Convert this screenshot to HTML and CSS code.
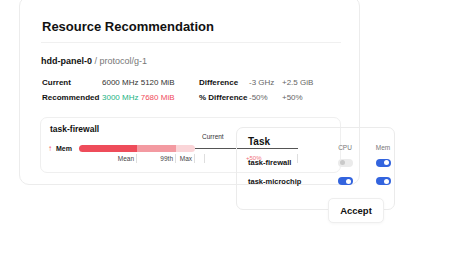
FILE: index.html
```html
<html>
    <head>
        <link rel="stylesheet" href="styles.css">
        <title>Resource Recommendation</title>
    </head>
    <body>
        <div class="card">
            <h1 class="title">Resource Recommendation</h1>
            <div class="divider"></div>
            <p class="path"><b>hdd-panel-0</b> <span class="muted">/ protocol/g-1</span></p>
            <div class="stats">
                <span class="label">Current</span>
                <span class="value">6000 MHz 5120 MiB</span>
                <span class="label">Difference</span>
                <span class="value soft">-3 GHz</span>
                <span class="value soft">+2.5 GiB</span>

                <span class="label">Recommended</span>
                <span class="value"><span class="good">3000 MHz</span> <span class="bad">7680 MiB</span></span>
                <span class="label">% Difference</span>
                <span class="value soft">-50%</span>
                <span class="value soft">+50%</span>
            </div>
            <div class="task-card">
                <div class="task-name">task-firewall</div>
                <div class="mem-row">
                    <span class="mem-label"><span class="arrow">&uarr;</span> Mem</span>
                    <div class="track">
                        <span class="seg seg-mean"></span>
                        <span class="seg seg-p99"></span>
                        <span class="seg seg-max"></span>
                        <span class="current-line"></span>
                        <span class="current-label">Current</span>
                    </div>
                </div>
                <div class="ticks">
                    <span class="tick w-mean">Mean</span>
                    <span class="tick w-p99">99th</span>
                    <span class="tick w-max">Max</span>
                    <span class="tick w-cur"></span>
                    <span class="tick w-rec"><span class="rec">+50%</span></span>
                </div>
            </div>
        </div>

        <!-- floating panel over the card -->
        <div class="panel">
            <div class="panel-grid">
                <span class="panel-head">Task</span>
                <span class="col-head">CPU</span>
                <span class="col-head">Mem</span>

                <span class="row-name">task-firewall</span>
                <span class="toggle off"></span>
                <span class="toggle"></span>

                <span class="row-name">task-microchip</span>
                <span class="toggle"></span>
                <span class="toggle"></span>
            </div>
        </div>
        <div class="accept">Accept</div>
    </body>
</html>
```

FILE: styles.css
```css
html {padding: 0;}
body {font-family: "Liberation Sans", Arial, sans-serif; color: #111; margin: 0; padding: 0; background: #fff; position: relative; width: 474px; height: 274px; overflow: hidden;}

.card {
    box-sizing: border-box;
    width: 341px;
    height: 189px;
    margin: -4px 0 0 19px;
    padding: 22px 18px 0 21px;
    border: 1px solid #ececec;
    border-radius: 10px;
    background: #fff;
}

.title {font-size: 13px; line-height: 16px; font-weight: bold; margin: 0; padding-left: 1px;}
.divider {height: 1px; background: #f0f0f0; margin-top: 7px;}

.path {font-size: 9px; line-height: 12px; margin: 12px 0 0 0;}
.muted {color: #777;}

.stats {
    display: grid;
    grid-template-columns: 60px 97px 50px 33px auto;
    grid-auto-rows: 15px;
    align-items: center;
    font-size: 8px;
    margin-top: 8px;
    padding-left: 1px;
}
.label {font-weight: bold; color: #111; white-space: nowrap;}
.value {color: #333; white-space: nowrap;}
.soft {color: #666;}
.good {color: #1db384;}
.bad {color: #f04b5b;}

.task-card {
    box-sizing: border-box;
    height: 56px;
    margin-top: 12px;
    margin-left: -1px;
    padding: 6px 0 0 9px;
    border: 1px solid #efefef;
    border-radius: 7px;
}
.task-name {font-size: 8.5px; line-height: 11px; font-weight: bold;}

.mem-row {display: flex; align-items: center; height: 8px; margin: 9px 0 0 -2px;}
.mem-label {width: 31px; font-size: 7px; font-weight: bold; white-space: nowrap;}
.arrow {color: #f04b5b; font-size: 8px; font-weight: normal; margin-right: 2px;}

.track {position: relative; width: 219px; height: 8px; display: flex; align-items: center;}
.seg {height: 7px; display: block;}
.seg-mean {width: 58px; background: #ee4c5a; border-radius: 4px 0 0 4px;}
.seg-p99 {width: 39px; background: #f39aa1;}
.seg-max {width: 19px; background: #fad5d8; border-radius: 0 4px 4px 0;}
.current-line {flex: 1; height: 1px; background: #555;}
.current-label {position: absolute; left: 123px; top: -11px; font-size: 6.5px; line-height: 8px; color: #333;}

.ticks {display: flex; margin: 1.5px 0 0 29px; font-size: 6.5px; line-height: 9px; color: #444;}
.tick {box-sizing: border-box; height: 9px; border-right: 1px solid #dedede; text-align: right; padding-right: 2px;}
.w-mean {width: 58px;}
.w-p99 {width: 39px;}
.w-max {width: 19px;}
.w-cur {width: 10px;}
.w-rec {width: 93px; text-align: left; padding-left: 41px;}
.rec {color: #f0707c; font-size: 6px;}

.panel {
    position: absolute;
    left: 236px;
    top: 127px;
    box-sizing: border-box;
    width: 159px;
    height: 83px;
    padding: 7px 0 0 11px;
    border: 1px solid #ebebeb;
    border-radius: 7px;
}
.panel-grid {
    display: grid;
    grid-template-columns: 74px 30px 30px;
    grid-template-rows: 18px 19px 18px;
    column-gap: 8px;
    align-items: center;
}
.panel-head {font-size: 10px; line-height: 14px; font-weight: bold; align-self: start;}
.col-head {font-size: 6.5px; line-height: 9px; color: #777; text-align: center; align-self: end; margin-bottom: 1px;}
.row-name {font-size: 7.5px; font-weight: bold; white-space: nowrap;}

.toggle {
    justify-self: center;
    position: relative;
    width: 15px;
    height: 8px;
    border-radius: 4px;
    background: #3364de;
}
.toggle:after {
    content: "";
    position: absolute;
    top: 1.5px;
    right: 1.5px;
    width: 5px;
    height: 5px;
    border-radius: 50%;
    background: #fff;
}
.toggle.off {background: #ebebeb;}
.toggle.off:after {right: auto; left: 2px; background: #c9c9c9;}

.accept {
    position: absolute;
    left: 328px;
    top: 198px;
    box-sizing: border-box;
    width: 56px;
    height: 25px;
    line-height: 23px;
    text-align: center;
    font-size: 9.5px;
    font-weight: bold;
    border: 1px solid #eeeeee;
    border-radius: 5px;
    background: #fff;
    box-shadow: 0 1px 3px rgba(0, 0, 0, 0.04);
}
```
